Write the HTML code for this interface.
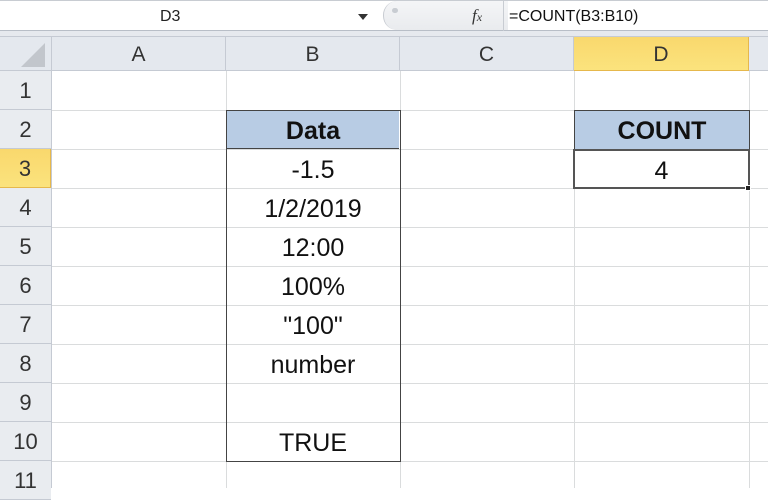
<!DOCTYPE html>
<html><head><style>
body{margin:0;width:768px;height:488px;overflow:hidden;background:#fff;font-family:"Liberation Sans",sans-serif;position:relative}
div{position:absolute;box-sizing:border-box}
.hl{height:1px;left:52px;right:0;background:#dadcdd}
.vl{width:1px;top:71px;bottom:0;background:#dadcdd}
.rh{left:0;width:51px;height:39px;background:#e9ecf0;border-bottom:1px solid #c5cad3;text-align:center;font-size:22px;line-height:40px;color:#333}
.ch{top:37px;height:34px;background:#e4e8ee;border-right:1px solid #c5cad3;border-bottom:1px solid #c5cad3;text-align:center;font-size:21px;line-height:35px;color:#333}
.c{left:226px;width:174px;height:39px;text-align:center;font-size:25px;line-height:43px;color:#111}
</style></head><body>
<div style="left:0;top:0;width:768px;height:31px;background:#fff;border-top:1px solid #c8ccd2;border-bottom:1px solid #b8bec7"></div>
<div style="left:0;top:31px;width:768px;height:6px;background:#e6e9ee;border-bottom:1px solid #c5cad3"></div>
<div style="left:160px;top:8px;font-size:16px;color:#222">D3</div>
<div style="left:358px;top:14px;width:0;height:0;border-left:5px solid transparent;border-right:5px solid transparent;border-top:6px solid #333"></div>
<div style="left:383px;top:1px;width:125px;height:29px;border-left:1px solid #c8ccd2;border-radius:14px 0 0 14px;background:linear-gradient(#f4f5f7,#e9ebee)"></div>
<div style="left:392px;top:8px;width:6px;height:5px;border-radius:3px;background:#c8ccd2"></div>
<div style="left:472px;top:6px;font-family:'Liberation Serif',serif;font-style:italic;font-size:17px;color:#333">f<span style="font-size:12px">x</span></div>
<div style="left:503px;top:1px;width:1px;height:30px;background:#c8ccd2"></div>
<div style="left:509px;top:8px;font-size:16px;color:#111">=COUNT(B3:B10)</div>

<div class="ch" style="left:0;width:52px;background:#e4e8ee"></div>
<div style="left:21px;top:43px;width:0;height:0;border-left:24px solid transparent;border-bottom:24px solid #c2c6cc"></div>
<div class="ch" style="left:52px;width:174px">A</div>
<div class="ch" style="left:226px;width:174px">B</div>
<div class="ch" style="left:400px;width:174px">C</div>
<div class="ch" style="left:574px;width:175px;background:linear-gradient(#f9d86d,#fbe37d);border-right:1px solid #e6b84c;border-bottom:1px solid #e6b84c">D</div>
<div class="ch" style="left:749px;width:30px"></div>

<div class="rh" style="top:71px">1</div>
<div class="rh" style="top:110px">2</div>
<div class="rh" style="top:149px;background:linear-gradient(#f9d86d,#fbe37d);border-bottom:1px solid #e6b84c;border-right:1px solid #e6b84c">3</div>
<div class="rh" style="top:188px">4</div>
<div class="rh" style="top:227px">5</div>
<div class="rh" style="top:266px">6</div>
<div class="rh" style="top:305px">7</div>
<div class="rh" style="top:344px">8</div>
<div class="rh" style="top:383px">9</div>
<div class="rh" style="top:422px">10</div>
<div class="rh" style="top:461px">11</div>
<div style="left:51px;top:71px;width:1px;bottom:0;background:#c5cad3"></div>

<div class="hl" style="top:110px"></div><div class="hl" style="top:149px"></div><div class="hl" style="top:188px"></div>
<div class="hl" style="top:227px"></div><div class="hl" style="top:266px"></div><div class="hl" style="top:305px"></div>
<div class="hl" style="top:344px"></div><div class="hl" style="top:383px"></div><div class="hl" style="top:422px"></div>
<div class="hl" style="top:461px"></div>
<div class="vl" style="left:226px"></div><div class="vl" style="left:400px"></div><div class="vl" style="left:574px"></div><div class="vl" style="left:749px"></div>

<div style="left:226px;top:110px;width:175px;height:352px;border:1px solid #444"></div>
<div class="c" style="top:111px;left:227px;width:172px;height:38px;background:#b8cce4;border-bottom:1px solid #444;font-weight:bold;line-height:41px">Data</div>
<div class="c" style="top:149px">-1.5</div>
<div class="c" style="top:188px">1/2/2019</div>
<div class="c" style="top:227px">12:00</div>
<div class="c" style="top:266px">100%</div>
<div class="c" style="top:305px">"100"</div>
<div class="c" style="top:344px">number</div>
<div class="c" style="top:422px">TRUE</div>

<div style="left:574px;top:110px;width:176px;height:40px;background:#b8cce4;border:1px solid #444;text-align:center;font-size:25px;line-height:41px;font-weight:bold;color:#111">COUNT</div>
<div style="left:573px;top:149px;width:177px;height:40px;background:#fff;border:2px solid #555;text-align:center;font-size:25px;line-height:40px;color:#111">4</div>
<div style="left:745px;top:185px;width:6px;height:6px;background:#222;border:1px solid #fff"></div>
</body></html>
